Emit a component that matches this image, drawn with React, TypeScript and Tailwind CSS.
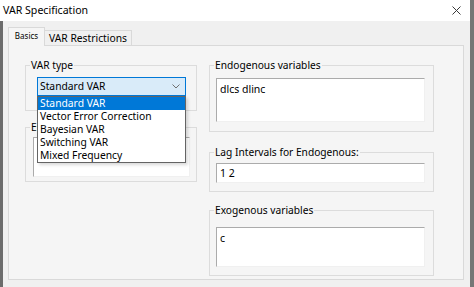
import React from "react";

const GroupBox = ({
  label,
  className,
  children,
}: {
  label: string;
  className: string;
  children?: React.ReactNode;
}) => {
  return (
    <fieldset className={`border border-[#dcdcdc] ${className}`}>
      <legend className="ml-[4px] px-[1px] whitespace-nowrap text-[10.2px] leading-[16px] text-black">
        {label}
      </legend>
      {children}
    </fieldset>
  );
};

const TextBox = ({ value, className }: { value?: string; className: string }) => {
  return (
    <div
      className={`bg-white border border-t-[#ababab] border-l-[#ababab] border-r-[#f0f0f0] border-b-[#f0f0f0] pl-[3px] text-[10.5px] leading-[16px] text-black ${className}`}
    >
      {value}
    </div>
  );
};

const items = [
  "Standard VAR",
  "Vector Error Correction",
  "Bayesian VAR",
  "Switching VAR",
  "Mixed Frequency",
];

export default function App() {
  return (
    <div className="flex w-[474px] h-[287px] overflow-hidden font-['Noto_Sans',sans-serif] bg-[#f0f0f0]">
      <div className="flex flex-col w-[470px]">
        {/* title bar */}
        <div className="flex items-center h-[21px] bg-white pl-[3px]">
          <span className="flex-1 text-[10.6px] leading-none text-black">VAR Specification</span>
          <span className="flex w-[18px] shrink-0">
            <svg width="9" height="9" viewBox="0 0 9 9">
              <path d="M0.5 0.5 L8.5 8.5 M8.5 0.5 L0.5 8.5" stroke="#3a3a3a" strokeWidth="1" />
            </svg>
          </span>
        </div>

        <div className="flex flex-1">
          <div className="w-[3px] bg-[#6c6c6c]" />
          <div className="flex-1 pl-[5px] pt-[6px]">
            {/* tabs */}
            <div className="flex items-end h-[18px]">
              <div className="relative z-10 flex items-center justify-center w-[37px] h-[19px] -mb-px border border-b-0 border-[#d9d9d9] bg-[#f5f5f5] pb-[2px] text-[8px] leading-none text-black">
                Basics
              </div>
              <div className="flex items-center justify-center w-[87px] h-[15px] whitespace-nowrap border border-l-0 border-b-0 border-[#d9d9d9] bg-[#f0f0f0] text-[10.3px] leading-none text-black">
                VAR Restrictions
              </div>
            </div>

            {/* tab panel */}
            <div className="relative flex gap-[12px] w-[456px] h-[235px] border border-[#d9d9d9] bg-[#f5f5f5] pl-[16px] pt-[11px]">
              <div className="flex flex-col w-[172px]">
                <GroupBox label="VAR type" className="h-[54px]">
                  <div className="relative ml-[11px] mt-[4px] w-[149px]">
                    <div className="flex items-center justify-between h-[19px] border border-[#0078d7] bg-[#d9ebf9] pl-[2px] pr-[5px] text-[10.3px] leading-none text-black">
                      <span>Standard VAR</span>
                      <svg width="8" height="5" viewBox="0 0 8 5">
                        <path d="M0.5 0.5 L4 4 L7.5 0.5" fill="none" stroke="#707070" strokeWidth="1" />
                      </svg>
                    </div>
                    <div className="absolute left-0 top-full z-20 w-[149px] border border-[#646464] bg-white shadow-[2px_2px_3px_rgba(0,0,0,0.15)]">
                      {items.map((it, i) => (
                        <div
                          key={it}
                          className={`h-[13px] pl-[2px] whitespace-nowrap text-[10.3px] leading-[13px] ${
                            i === 0 ? "bg-[#0078d7] text-white" : "text-black"
                          }`}
                        >
                          {it}
                        </div>
                      ))}
                    </div>
                  </div>
                </GroupBox>
                <GroupBox label="Estimation sample" className="mt-[8px] h-[63px]">
                  <TextBox className="ml-[7px] mt-[2px] w-[157px] h-[40px]" />
                </GroupBox>
              </div>

              <div className="flex flex-col w-[225px]">
                <GroupBox label="Endogenous variables" className="h-[75px]">
                  <TextBox value="dlcs dlinc" className="ml-[6px] mt-[5px] w-[209px] h-[44px] pt-[2px]" />
                </GroupBox>
                <GroupBox label="Lag Intervals for Endogenous:" className="mt-[12px] h-[48px]">
                  <TextBox value="1 2" className="ml-[6px] mt-[3px] w-[209px] h-[20px] pt-[1px]" />
                </GroupBox>
                <GroupBox label="Exogenous variables" className="mt-[10px] h-[74px]">
                  <TextBox value="c" className="ml-[6px] mt-[9px] w-[209px] h-[40px] pt-[2px]" />
                </GroupBox>
              </div>
            </div>
          </div>
        </div>
      </div>
      <div className="w-[4px] bg-[#767676]" />
    </div>
  );
}
